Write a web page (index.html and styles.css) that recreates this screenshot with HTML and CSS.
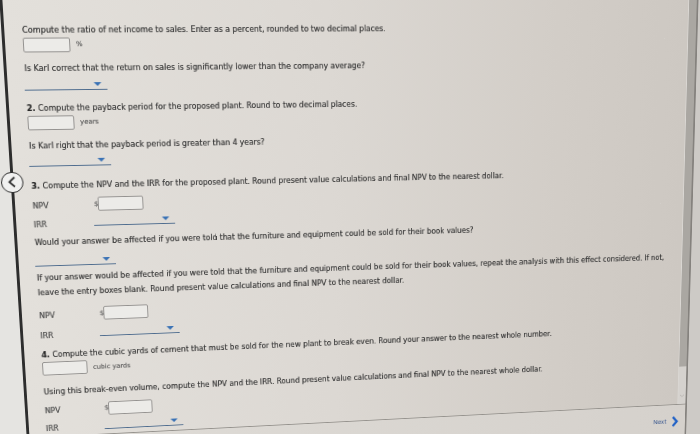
FILE: index.html
```html
<!DOCTYPE html>
<html lang="en">
<head>
<meta charset="utf-8">
<title>Capital budgeting questions</title>
<link rel="stylesheet" href="styles.css">
</head>
<body>
<div class="stage">
  <div class="rail"></div>
  <div class="win">
    <div class="upper">
      <div class="panel">
        <p class="line">Compute the ratio of net income to sales. Enter as a percent, rounded to two decimal places.</p>
        <div class="inrow"><span class="box"></span><span class="unit">%</span></div>
        <p class="line mt-8">Is Karl correct that the return on sales is significantly lower than the company average?</p>
        <div class="dd solo mt-6"></div>

        <p class="line mt-11"><b class="num">2.</b> Compute the payback period for the proposed plant. Round to two decimal places.</p>
        <div class="inrow"><span class="box"></span><span class="unit">years</span></div>
        <p class="line mt-8">Is Karl right that the payback period is greater than 4 years?</p>
        <div class="dd solo mt-5"></div>

        <p class="line mt-12"><b class="num">3.</b> Compute the NPV and the IRR for the proposed plant. Round present value calculations and final NPV to the nearest dollar.</p>
        <div class="frow mt-6"><span class="lbl">NPV</span><span class="cur">$</span><span class="box"></span></div>
        <div class="frow irr mt-5"><span class="lbl">IRR</span><span class="dd"></span></div>
        <p class="line mt-5">Would your answer be affected if you were told that the furniture and equipment could be sold for their book values?</p>
        <div class="dd solo mt-9"></div>
        <p class="line two mt-4">If your answer would be affected if you were told that the furniture and equipment could be sold for their book values, repeat the analysis with this effect considered. If not,<br>leave the entry boxes blank. Round present value calculations and final NPV to the nearest dollar.</p>
        <div class="frow mt-8"><span class="lbl">NPV</span><span class="cur">$</span><span class="box"></span></div>
        <div class="frow irr mt-7"><span class="lbl">IRR</span><span class="dd"></span></div>

        <p class="line mt-7"><b class="num">4.</b> Compute the cubic yards of cement that must be sold for the new plant to break even. Round your answer to the nearest whole number.</p>
        <div class="inrow mt-1"><span class="box"></span><span class="unit">cubic yards</span></div>
        <p class="line mt-10">Using this break-even volume, compute the NPV and the IRR. Round present value calculations and final NPV to the nearest whole dollar.</p>
        <div class="frow mt-6"><span class="lbl">NPV</span><span class="cur">$</span><span class="box"></span></div>
        <div class="frow irr mt-5"><span class="lbl">IRR</span><span class="dd"></span></div>
      </div>
      <div class="scroll">
        <div class="thumb"></div>
        <div class="track"><svg class="down" width="7" height="5" viewBox="0 0 7 5"><polyline points="1,1 3.5,3.5 6,1" fill="none" stroke="#b4b1ad" stroke-width="1"/></svg></div>
      </div>
    </div>
    <div class="footer">
      <span class="next">Next</span>
      <svg class="next-chev" width="9" height="14" viewBox="0 0 9 14"><polyline points="1.8,1.5 6.8,7 1.8,12.5" fill="none" stroke="#2262c6" stroke-width="2.7"/></svg>
    </div>
  </div>
  <div class="edge"></div>
  <div class="beyond"></div>
  <button class="back" type="button" aria-label="Previous"><svg width="19" height="19" viewBox="0 0 19 19"><polyline points="12,4.5 6.5,9.5 12,14.5" fill="none" stroke="#2c2c2c" stroke-width="1.7"/></svg></button>
</div>
</body>
</html>
```

FILE: styles.css
```css
html, body {
  margin: 0;
  height: 100%;
  overflow: hidden;
  background: #d3cfca;
}

body {
  font-family: "DejaVu Sans", Verdana, sans-serif;
  color: #3a3a3a;
}

/* flat page, projected to the perspective of the photographed screen */
.stage {
  position: relative;
  width: 860px;
  height: 540px;
  display: flex;
  background: #cfcac4;
  transform-origin: 0 0;
  transform: matrix3d(1.005987, -0.0004678, 0, 0.00011698,
                      0.062673, 1.005987, 0, 0.00013078,
                      0, 0, 1, 0,
                      -42.4758, -10.04116, 0, 1);
}

.rail {
  flex: none;
  width: 41px;
  background: #e5e4e1;
  border-right: 3px solid #2d2d2d;
}

.win {
  flex: none;
  width: 756px;
  display: flex;
  flex-direction: column;
}

.upper {
  flex: none;
  height: 474px;
  display: flex;
}

.panel {
  flex: 1;
  box-sizing: border-box;
  padding: 33.3px 0 0 18px;
  overflow: hidden;
  display: flex;
  flex-direction: column;
  align-items: flex-start;
  font-size: 8.2px;
  text-shadow: 0 0 0.5px rgba(40, 40, 40, 0.6);
  background: linear-gradient(90deg, #e3e0db 0%, #dcd8d3 45%, #d2cdc7 80%, #cdc8c2 100%);
}

.line {
  margin: 0;
  height: 14px;
  line-height: 14px;
  white-space: nowrap;
}

.line.two {
  height: 32px;
  line-height: 16px;
}

.mt-1 { margin-top: 1px; }
.mt-4 { margin-top: 4px; }
.mt-5 { margin-top: 5px; }
.mt-6 { margin-top: 6px; }
.mt-7 { margin-top: 7px; }
.mt-8 { margin-top: 8.4px; }
.mt-9 { margin-top: 9px; }
.mt-10 { margin-top: 10.4px; }
.mt-11 { margin-top: 11.1px; }
.mt-12 { margin-top: 12.6px; }

.num {
  font-weight: bold;
  color: #2a2a2a;
}

.inrow {
  display: flex;
  align-items: center;
  height: 16px;
}

.box {
  flex: none;
  display: block;
  width: 48px;
  height: 15px;
  box-sizing: border-box;
  border: 1px solid #949290;
  border-radius: 2px;
  background: #ecebe8;
}

.unit {
  margin-left: 6px;
  font-size: 7px;
  color: #666;
}

.frow {
  display: flex;
  align-items: center;
  height: 16px;
}

.frow.irr {
  align-items: flex-start;
  height: 14px;
}

.lbl {
  flex: none;
  width: 64px;
  line-height: 14px;
  color: #555;
}

.cur {
  flex: none;
  width: 4px;
  font-size: 7px;
  color: #777;
}

.dd {
  position: relative;
  display: block;
  flex: none;
  width: 86px;
  height: 10.5px;
  box-sizing: border-box;
  border-bottom: 1.5px solid #4e6c8e;
  margin-left: -1px;
}

.dd::after {
  content: "";
  position: absolute;
  right: 6px;
  bottom: 3px;
  border-left: 4px solid transparent;
  border-right: 4px solid transparent;
  border-top: 4px solid #3a72b5;
}

.dd.solo {
  width: 85px;
}

.scroll {
  flex: none;
  width: 9px;
  display: flex;
  flex-direction: column;
  border-left: 1px solid #dad7d3;
}

.thumb {
  height: 429px;
  background: #aaa7a2;
}

.track {
  flex: 1;
  display: flex;
  justify-content: center;
  align-items: flex-end;
  padding-bottom: 7px;
  background: #d5d2ce;
}

.down { display: block; }

.footer {
  flex: 1;
  display: flex;
  justify-content: flex-end;
  align-items: flex-start;
  gap: 6px;
  padding: 12.5px 8px 0 0;
  border-top: 1.5px solid #96938e;
  background: linear-gradient(90deg, #dfdcd7 0%, #d5d1cc 100%);
}

.next {
  font-size: 7px;
  line-height: 14px;
  color: #33528c;
}

.next-chev { display: block; }

.edge {
  flex: none;
  width: 2px;
  background: #85827e;
}

.beyond {
  flex: 1;
  background: #cdcac6;
}

.back {
  position: absolute;
  left: 31px;
  top: 185.6px;
  width: 22.5px;
  height: 22.5px;
  padding: 0;
  box-sizing: border-box;
  border: 1.5px solid #2d2d2d;
  border-radius: 50%;
  background: #f1f1f0;
  display: flex;
  align-items: center;
  justify-content: center;
}

.back svg { display: block; }
```
